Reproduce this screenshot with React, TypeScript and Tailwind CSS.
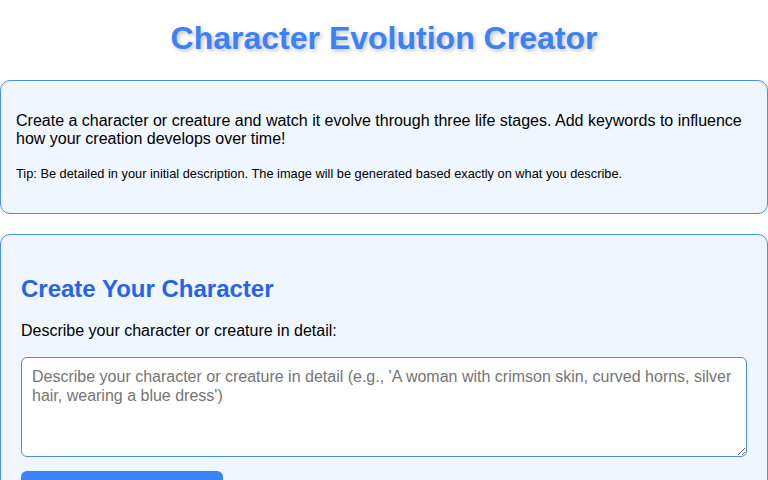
export default function App() {
  return (
    <div className="min-h-screen bg-white font-['Liberation_Sans',Arial,sans-serif] text-black">
      {/* Title */}
      <h1 className="pt-[20px] pb-[23px] text-center text-[32px] leading-[37px] font-bold text-[#3b82f6] [text-shadow:2px_2px_4px_rgba(0,0,0,0.25)]">
        Character Evolution Creator
      </h1>

      {/* Intro */}
      <div className="rounded-[10px] border border-[#4a90e2] bg-[#eff6ff] px-[15px] pt-[31px] pb-[32px]">
        <p className="text-[16px] leading-[18.4px]">
          Create a character or creature and watch it evolve through three life stages. Add keywords to influence
          how your creation develops over time!
        </p>
        <p className="mt-[17px] text-[12.8px] leading-[15px]">
          Tip: Be detailed in your initial description. The image will be generated based exactly on what you describe.
        </p>
      </div>

      {/* Create form */}
      <div className="mt-[20px] rounded-[10px] border border-[#4a90e2] bg-[#eff6ff] px-[20px] pt-[40px] pb-[20px]">
        <h2 className="text-[24px] leading-[28px] font-bold text-[#2563eb]">Create Your Character</h2>
        <label className="mt-[19px] block text-[16px] leading-[18.4px]">
          Describe your character or creature in detail:
        </label>
        <textarea
          className="mt-[17px] block h-[100px] w-full rounded-[6px] border border-[#4a90e2] bg-white px-[10px] pt-[10px] pb-[8px] text-[16px] leading-[18.4px] placeholder:text-[#757575]"
          placeholder="Describe your character or creature in detail (e.g., 'A woman with crimson skin, curved horns, silver hair, wearing a blue dress')"
        />
        <button className="mt-[14px] h-[40px] w-[202px] rounded-[6px] bg-[#3b82f6] text-[16px] font-bold text-white">
          Generate Character
        </button>
      </div>
    </div>
  );
}
